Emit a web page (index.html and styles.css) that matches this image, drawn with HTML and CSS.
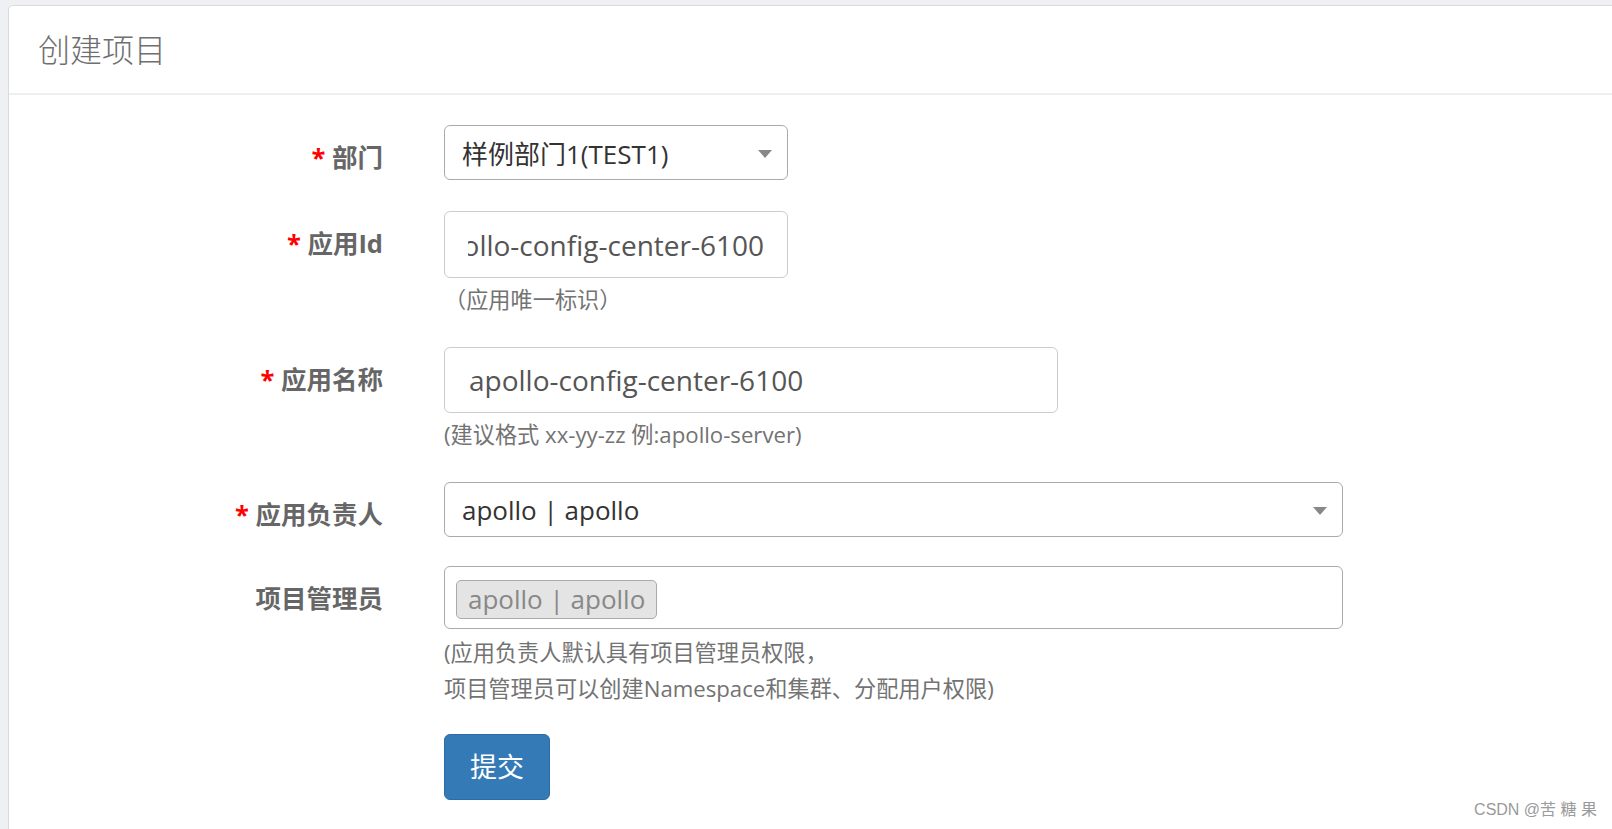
FILE: index.html
```html
<!DOCTYPE html>
<html lang="zh-CN">
<head>
  <meta charset="UTF-8">
  <title>创建项目</title>
  <link rel="stylesheet" href="styles.css">
</head>
<body>
  <div class="panel">
    <div class="panel-heading">创建项目</div>
    <form class="panel-body" onsubmit="return false">
      <div class="form-group first">
        <label class="control-label"><span class="req">*</span> 部门</label>
        <div class="controls">
          <div class="box select w-sm">样例部门1(TEST1)<span class="caret"></span></div>
        </div>
      </div>

      <div class="form-group">
        <label class="control-label"><span class="req">*</span> 应用Id</label>
        <div class="controls">
          <div class="box input input-id w-sm"><div class="scroll"><span>apollo-config-center-6100</span></div></div>
          <div class="help">（应用唯一标识）</div>
        </div>
      </div>

      <div class="form-group">
        <label class="control-label"><span class="req">*</span> 应用名称</label>
        <div class="controls">
          <div class="box input input-name w-md">apollo-config-center-6100</div>
          <div class="help">(建议格式 xx-yy-zz 例:apollo-server)</div>
        </div>
      </div>

      <div class="form-group">
        <label class="control-label"><span class="req">*</span> 应用负责人</label>
        <div class="controls">
          <div class="box select w-lg">apollo | apollo<span class="caret"></span></div>
        </div>
      </div>

      <div class="form-group last">
        <label class="control-label">项目管理员</label>
        <div class="controls">
          <div class="box tags w-lg"><span class="tag">apollo | apollo</span></div>
          <div class="help help-2">(应用负责人默认具有项目管理员权限，<br>项目管理员可以创建Namespace和集群、分配用户权限)</div>
        </div>
      </div>

      <div class="form-group">
        <span></span>
        <div class="controls">
          <button class="btn" type="submit">提交</button>
        </div>
      </div>
    </form>
  </div>

  <div class="watermark">CSDN @苦 糖 果</div>
</body>
</html>
```

FILE: styles.css
```css
html, body { margin: 0; height: 100%; }
body {
  background: #eef0f4; overflow: hidden; position: relative;
  font-family: "Open Sans", "Noto Sans CJK SC", sans-serif;
}
.panel {
  margin: 5px -20px 0 8px; min-height: 900px; background: #fff;
  border: 1px solid #dadada; border-radius: 5px 5px 0 0;
}
.panel-heading {
  padding: 21px 29px; line-height: 45px; font-size: 32px; font-weight: 300;
  color: #6f6f6f; border-bottom: 2px solid #edf0f3;
}
.panel-body { padding-top: 30px; }

.form-group {
  display: grid; grid-template-columns: 374px auto; column-gap: 61px;
  margin-bottom: 29px;
}
.form-group.first { margin-bottom: 31px; }
.form-group.last { margin-bottom: 27px; }
.control-label {
  text-align: right; font-weight: bold; font-size: 25.5px; line-height: 35px;
  padding-top: 15px; color: #666;
}
.req { color: #f00; }

.box {
  box-sizing: border-box; display: flex; align-items: center; position: relative;
  background: #fff; border: 1px solid #aaa; border-radius: 6px; white-space: nowrap;
}
.w-sm { width: 344px; }
.w-md { width: 614px; }
.w-lg { width: 899px; }

.select { height: 55px; padding: 0 17px; font-size: 26px; color: #333; }
.caret {
  position: absolute; right: 15px; top: 50%; margin-top: -3px; width: 0; height: 0;
  border-top: 8px solid #888; border-left: 7.5px solid transparent; border-right: 7.5px solid transparent;
}

.input { border-color: #ccc; font-size: 28px; color: #555; padding: 0 24px; }
.input-id { height: 67px; padding: 0 23px; }
.input-name { height: 66px; }
.scroll { flex: 1; overflow: hidden; display: flex; justify-content: flex-end; }
.scroll span { flex-shrink: 0; }

.tags { height: 63px; padding: 13px 11px 0; align-items: flex-start; }
.tag {
  background: #e4e4e4; border: 1px solid #aaa; border-radius: 5px;
  padding: 0 11px; line-height: 37px; font-size: 26px; color: #888;
}

.help { font-size: 22.2px; line-height: 36px; color: #737373; margin-top: 4px; }
.help-2 { margin-top: 6px; }

.btn {
  font-family: inherit; font-size: 27px; line-height: 40px; color: #fff;
  background: #337ab7; border: 1px solid #2e6da4; border-radius: 6px;
  padding: 12px 25px; cursor: pointer;
}

.watermark {
  position: absolute; right: 15px; bottom: 9px;
  font: 16px "Liberation Sans", "Noto Sans CJK SC", sans-serif; color: #9a9a9a;
}
```
